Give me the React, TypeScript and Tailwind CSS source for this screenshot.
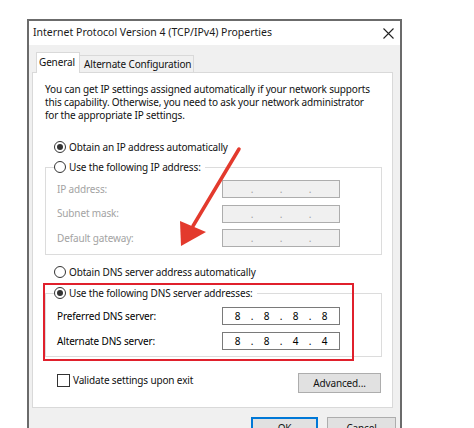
import React from "react";

function Radio({ checked }: { checked?: boolean }) {
  return (
    <span className="w-[12px] h-[12px] rounded-full border border-[#333333] bg-white flex items-center justify-center shrink-0">
      {checked ? <span className="w-[6px] h-[6px] rounded-full bg-[#333333]" /> : null}
    </span>
  );
}

function IpBox({ values, disabled }: { values: string[]; disabled?: boolean }) {
  return (
    <div
      className={
        "w-[118px] h-[18px] border flex items-center " +
        (disabled ? "bg-[#f0f0f0] border-[#adadad] text-[#a0a0a0]" : "bg-white border-[#7a7a7a] text-black")
      }
    >
      {values.map((v, i) => (
        <React.Fragment key={i}>
          {i > 0 ? (
            <span className="w-0 flex justify-center overflow-visible leading-[16px]">.</span>
          ) : null}
          <span className="flex-1 text-center leading-[16px]">{v}</span>
        </React.Fragment>
      ))}
    </div>
  );
}

function Row({ label, values, disabled }: { label: string; values: string[]; disabled?: boolean }) {
  return (
    <div className="flex items-center h-[18px]">
      <span className={"w-[165px] " + (disabled ? "text-[#a3a3a3]" : "text-black")}>{label}</span>
      <IpBox values={values} disabled={disabled} />
    </div>
  );
}

export default function App() {
  return (
    <div className="w-[474px] h-[428px] bg-white overflow-hidden relative font-['Noto_Sans',sans-serif] text-[10px] tracking-[-0.15px] whitespace-nowrap text-[#111111]">
      <div className="ml-[27px] mt-[19px] w-[375px] h-[430px] border-2 border-[#6b6b6b] bg-[#f0f0f0] flex flex-col">
        {/* title bar */}
        <div className="h-[24px] bg-white flex items-center justify-between pl-[4px] pr-[6px] shrink-0">
          <span className="text-[10.5px] tracking-normal text-[#1a1a1a]">Internet Protocol Version 4 (TCP/IPv4) Properties</span>
          <svg width="11" height="11" viewBox="0 0 11 11">
            <path d="M0.5 0.5 L10.5 10.5 M10.5 0.5 L0.5 10.5" stroke="#222" strokeWidth="1.1" fill="none" />
          </svg>
        </div>
        {/* tabs */}
        <div className="mt-[7px] ml-[7px] flex items-end shrink-0 relative z-10 -mb-[1px]">
          <div className="w-[44px] h-[21px] bg-white border border-b-0 border-[#d9d9d9] flex items-center pl-[2px] pb-[2px]">
            General
          </div>
          <div className="w-[114px] h-[17px] bg-[#f0f0f0] border border-l-0 border-b-0 border-[#d9d9d9] flex items-center pl-[4px] mb-[1px]">
            Alternate Configuration
          </div>
        </div>
        {/* panel */}
        <div className="ml-[3px] w-[361px] h-[336px] bg-white border border-[#d9d9d9] relative shrink-0 px-[12px] pt-[10px]">
          <p className="leading-[13px]">
            You can get IP settings assigned automatically if your network supports
            <br />
            this capability. Otherwise, you need to ask your network administrator
            <br />
            for the appropriate IP settings.
          </p>
          <div className="mt-[18px] ml-[9px] h-[14px] flex items-center gap-[3px]">
            <Radio checked />
            <span>Obtain an IP address automatically</span>
          </div>
          <fieldset className="mt-[6px] w-[337px] border border-[#dcdcdc] p-0">
            <legend className="ml-[8px] pr-[4px] h-[14px]">
              <span className="flex items-center gap-[3px] h-[14px]">
                <Radio />
                <span>Use the following IP address:</span>
              </span>
            </legend>
            <div className="flex flex-col gap-[6.5px] pl-[11px] pt-[6px] pb-[7px]">
              <Row label="IP address:" values={["", "", "", ""]} disabled />
              <Row label="Subnet mask:" values={["", "", "", ""]} disabled />
              <Row label="Default gateway:" values={["", "", "", ""]} disabled />
            </div>
          </fieldset>
          <div className="mt-[10px] ml-[9px] h-[14px] flex items-center gap-[3px]">
            <Radio />
            <span>Obtain DNS server address automatically</span>
          </div>
          <fieldset className="mt-[7px] w-[337px] border border-[#dcdcdc] p-0">
            <legend className="ml-[8px] pr-[4px] h-[14px]">
              <span className="flex items-center gap-[3px] h-[14px]">
                <Radio checked />
                <span>Use the following DNS server addresses:</span>
              </span>
            </legend>
            <div className="flex flex-col gap-[7px] pl-[11px] pt-[7px] pb-[6px]">
              <Row label="Preferred DNS server:" values={["8", "8", "8", "8"]} />
              <Row label="Alternate DNS server:" values={["8", "8", "4", "4"]} />
            </div>
          </fieldset>
          <div className="mt-[16px] flex items-start justify-between w-[337px]">
            <div className="ml-[12px] flex items-center gap-[3px] h-[14px]">
              <span className="w-[13px] h-[13px] border border-[#333333] bg-white" />
              <span>Validate settings upon exit</span>
            </div>
            <div className="mr-[1px] w-[83px] h-[20px] bg-[#e1e1e1] border border-[#adadad] flex items-center justify-center">
              Advanced...
            </div>
          </div>

          {/* red highlight */}
          <div className="absolute left-[10px] top-[210px] w-[311px] h-[78px] border-2 border-[#e0202c]" />
          {/* arrow */}
          <svg className="absolute left-0 top-0" width="361" height="336" viewBox="0 0 361 336">
            <g transform="translate(-33,-73)">
              <line x1="239" y1="149" x2="193" y2="226" stroke="#e33a2d" strokeWidth="3.5" strokeLinecap="round" />
              <polygon points="181,246 180,221 206,232" fill="#e33a2d" />
            </g>
          </svg>
        </div>
        {/* buttons */}
        <div className="mt-[9px] flex justify-end gap-[9px] pr-[4px] shrink-0">
          <div className="w-[67px] h-[23px] bg-[#e1e1e1] border-2 border-[#0078d7] flex items-center justify-center">
            OK
          </div>
          <div className="w-[69px] h-[23px] bg-[#e1e1e1] border border-[#adadad] flex items-center justify-center">
            Cancel
          </div>
        </div>
      </div>
    </div>
  );
}
